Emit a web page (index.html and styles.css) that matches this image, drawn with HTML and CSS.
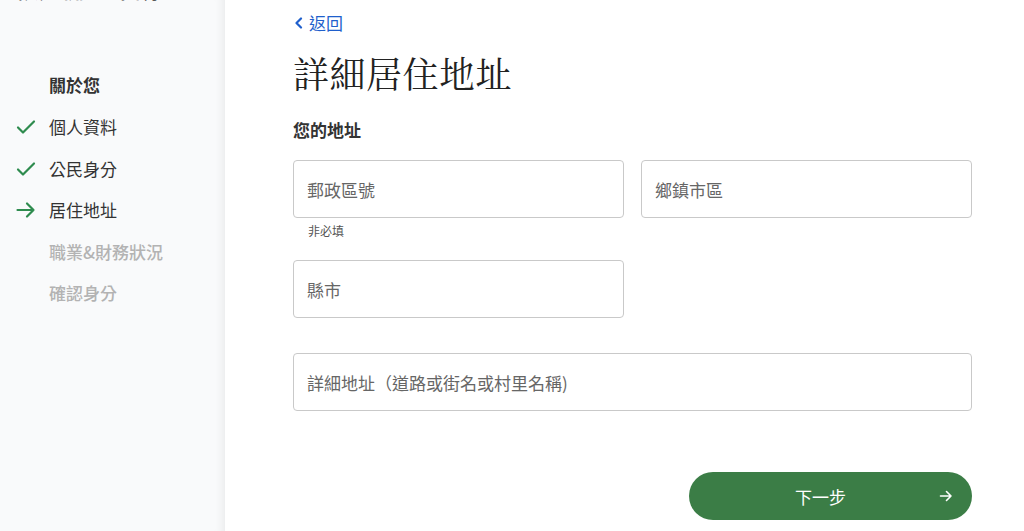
FILE: index.html
```html
<!DOCTYPE html>
<html lang="zh-Hant">
<head>
<meta charset="utf-8">
<title>詳細居住地址</title>
<link rel="stylesheet" href="styles.css">
</head>
<body>
<div class="page">
  <aside class="sidebar">
    <div class="brand">帳戶開立申請</div>
    <nav class="steps">
      <div class="group">關於您</div>
      <div class="step done">
        <svg class="ico" viewBox="0 0 24 24"><path d="M4 12.5l5 5L20 6.5" fill="none" stroke="currentColor" stroke-width="2.2" stroke-linecap="round" stroke-linejoin="round"/></svg>
        <span>個人資料</span>
      </div>
      <div class="step done">
        <svg class="ico" viewBox="0 0 24 24"><path d="M4 12.5l5 5L20 6.5" fill="none" stroke="currentColor" stroke-width="2.2" stroke-linecap="round" stroke-linejoin="round"/></svg>
        <span>公民身分</span>
      </div>
      <div class="step current">
        <svg class="ico" viewBox="0 0 24 24"><path d="M3.5 12h16M13 5.5l6.5 6.5-6.5 6.5" fill="none" stroke="currentColor" stroke-width="2.2" stroke-linecap="round" stroke-linejoin="round"/></svg>
        <span>居住地址</span>
      </div>
      <div class="step todo"><span>職業&amp;財務狀況</span></div>
      <div class="step todo"><span>確認身分</span></div>
    </nav>
  </aside>
  <main class="main">
    <a class="back" href="#">
      <svg class="back-ico" viewBox="0 0 12 12"><path d="M8 1.5L3.5 6 8 10.5" fill="none" stroke="currentColor" stroke-width="2.2" stroke-linecap="round" stroke-linejoin="round"/></svg>
      <span>返回</span>
    </a>
    <h1 class="title">詳細居住地址</h1>
    <div class="section-label">您的地址</div>
    <div class="grid">
      <div class="field">
        <div class="input">郵政區號</div>
        <div class="helper">非必填</div>
      </div>
      <div class="field">
        <div class="input">鄉鎮市區</div>
      </div>
      <div class="field">
        <div class="input">縣市</div>
      </div>
      <div class="field"></div>
      <div class="field wide">
        <div class="input">詳細地址（道路或街名或村里名稱)</div>
      </div>
    </div>
    <div class="actions">
      <button class="next">
        <span>下一步</span>
        <svg class="next-ico" viewBox="0 0 16 16"><path d="M2.5 8h10.5M8.5 3.5L13 8l-4.5 4.5" fill="none" stroke="currentColor" stroke-width="1.6" stroke-linecap="round" stroke-linejoin="round"/></svg>
      </button>
    </div>
  </main>
</div>
</body>
</html>
```

FILE: styles.css
```css
* { box-sizing: border-box; }
html, body { margin: 0; padding: 0; }
body {
  font-family: "Noto Sans CJK TC", "Noto Sans", sans-serif;
  color: #333;
  background: #fff;
  overflow: hidden;
}
.page {
  display: flex;
  height: 531px;
}
.sidebar {
  width: 225px;
  flex: none;
  background: #f9fafb;
  box-shadow: inset -10px 0 10px -8px rgba(0, 0, 0, 0.07);
}
.brand {
  margin-top: -26px;
  padding-left: 15px;
  font-size: 24px;
  line-height: 28px;
  color: #333;
  font-weight: 500;
  white-space: nowrap;
}
.steps {
  margin-top: 71px;
}
.group {
  padding-left: 49px;
  font-size: 17px;
  font-weight: 700;
  line-height: 24px;
  color: #333;
  margin-bottom: 18px;
}
.step {
  display: flex;
  align-items: center;
  height: 24px;
  margin-bottom: 17.5px;
  font-size: 17px;
  line-height: 24px;
}
.step .ico {
  width: 24px;
  height: 24px;
  margin-left: 14px;
  margin-right: 11px;
  color: #2e8b4e;
}
.step.todo span {
  padding-left: 49px;
  color: #b3b3b3;
  font-weight: 500;
}
.step.done span, .step.current span { color: #333; }

.main {
  flex: 1;
  padding: 12px 52px 0 68px;
}
.back {
  display: flex;
  align-items: center;
  gap: 4px;
  height: 22px;
  font-size: 17px;
  line-height: 22px;
  color: #1f5fcc;
  text-decoration: none;
}
.back-ico { width: 12px; height: 12px; }
.title {
  margin: 15px 0 0;
  font-family: "Noto Serif CJK TC", "Liberation Serif", serif;
  font-size: 36px;
  line-height: 48px;
  font-weight: 400;
  color: #222;
  letter-spacing: 0.5px;
}
.section-label {
  margin-top: 22px;
  font-size: 17px;
  font-weight: 700;
  line-height: 22px;
  color: #333;
}
.grid {
  margin-top: 19px;
  display: grid;
  grid-template-columns: 1fr 1fr;
  column-gap: 17px;
}
.field.wide { grid-column: 1 / 3; margin-top: 35px; }
.field:nth-child(3) { margin-top: 21px; }
.input {
  height: 58px;
  border: 1px solid #c9c9c9;
  border-radius: 4px;
  padding-left: 13px;
  display: flex;
  align-items: center;
  font-size: 17px;
  color: #666;
  background: #fff;
}
.helper {
  margin-top: 5px;
  padding-left: 15px;
  font-size: 12px;
  line-height: 16px;
  color: #555;
}
.actions {
  display: flex;
  justify-content: flex-end;
  margin-top: 61px;
}
.next {
  position: relative;
  width: 283px;
  height: 48px;
  border: none;
  border-radius: 24px;
  background: #3b7d46;
  color: #fff;
  font-family: "Noto Sans CJK TC", "Noto Sans", sans-serif;
  font-size: 17px;
  display: flex;
  align-items: center;
  justify-content: center;
  padding: 0 20px 0 0;
}
.next-ico {
  position: absolute;
  right: 18px;
  top: 16px;
  width: 16px;
  height: 16px;
}
```
